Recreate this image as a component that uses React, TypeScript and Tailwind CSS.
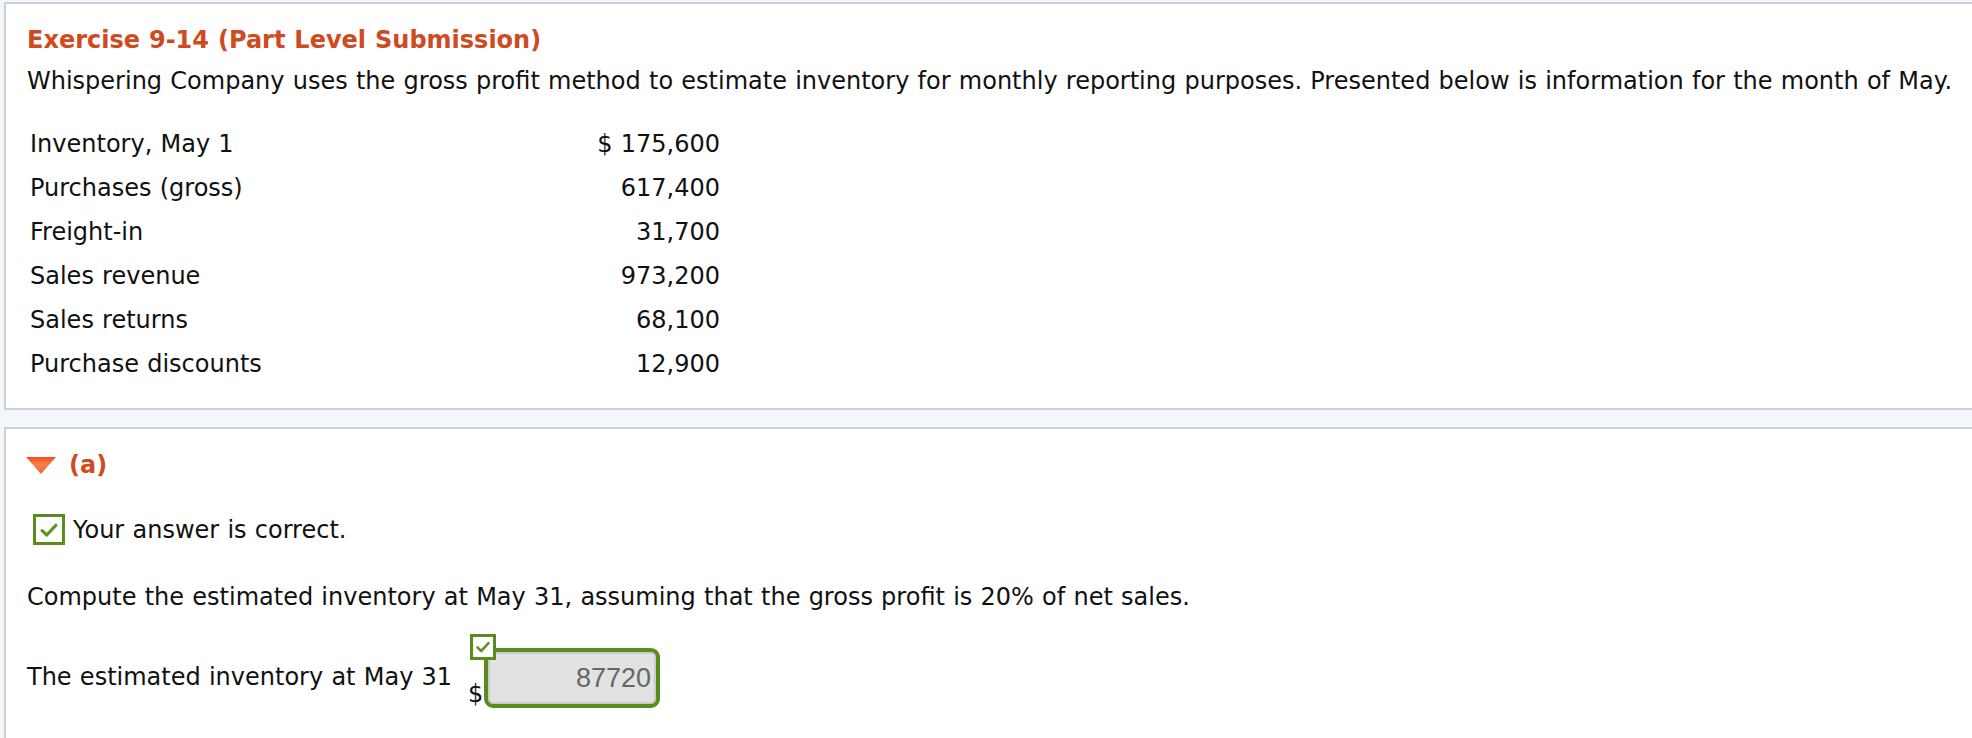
import React from "react";

// Data rows for the exercise table
const rows = [
  { label: "Inventory, May 1", value: "$ 175,600" },
  { label: "Purchases (gross)", value: "617,400" },
  { label: "Freight-in", value: "31,700" },
  { label: "Sales revenue", value: "973,200" },
  { label: "Sales returns", value: "68,100" },
  { label: "Purchase discounts", value: "12,900" },
];

function CheckBox({ size }: { size: "lg" | "sm" }) {
  const box = size === "lg" ? "w-[32px] h-[31px] border-[3px]" : "w-[26px] h-[26px] border-[3px]";
  const icon = size === "lg" ? "w-[20px] h-[20px]" : "w-[16px] h-[16px]";
  return (
    <div className={`${box} border-[#5b8a1f] bg-white flex items-center justify-center shrink-0`}>
      <svg viewBox="0 0 16 16" className={icon}>
        <polyline points="2.5,8.5 6.2,12 13.5,4.2" fill="none" stroke="#5f9424" strokeWidth="2.6" strokeLinecap="round" strokeLinejoin="round" />
      </svg>
    </div>
  );
}

function Caret() {
  return (
    <svg viewBox="0 0 30 17" className="w-[30px] h-[17px] shrink-0">
      <defs>
        <linearGradient id="caretFill" x1="0" y1="0" x2="0" y2="1">
          <stop offset="0" stopColor="#ef4f1c" />
          <stop offset="0.45" stopColor="#f6814a" />
          <stop offset="1" stopColor="#f2662c" />
        </linearGradient>
      </defs>
      <polygon points="0,0 30,0 15,17" fill="url(#caretFill)" />
    </svg>
  );
}

export default function App() {
  return (
    <div className="min-h-screen w-full bg-[#f4f7fa] pl-[4px] pt-[2px] font-['DejaVu_Sans',sans-serif] text-[24px] leading-[28px] text-[#111] [word-spacing:0.6px] overflow-hidden">
      {/* --- EXERCISE PANEL --- */}
      <section className="bg-white border-l-2 border-t-2 border-b-2 border-[#c8d0dc] pl-[21px] pt-[22px] pb-[22px]">
        <h1 className="font-bold text-[#cf4a1f] whitespace-nowrap">Exercise 9-14 (Part Level Submission)</h1>
        <p className="mt-[13px] whitespace-nowrap">
          Whispering Company uses the gross profit method to estimate inventory for monthly reporting purposes. Presented below is information for the month of May.
        </p>
        <div className="mt-[27px] w-[696px]">
          {rows.map((r) => (
            <div key={r.label} className="flex justify-between h-[44px] items-center px-[3px]">
              <span>{r.label}</span>
              <span>{r.value}</span>
            </div>
          ))}
        </div>
      </section>

      {/* --- PART (a) --- */}
      <section className="mt-[17px] min-h-[320px] bg-white border-l-2 border-t-2 border-[#c8d0dc] pl-[21px] pt-[22px]">
        <div className="flex items-center gap-[13px] -ml-[1px]">
          <Caret />
          <span className="font-bold text-[#cf4a1f]">(a)</span>
        </div>

        <div className="mt-[35px] flex items-center gap-[8px] ml-[6px]">
          <CheckBox size="lg" />
          <span>Your answer is correct.</span>
        </div>

        <p className="mt-[38px]">Compute the estimated inventory at May 31, assuming that the gross profit is 20% of net sales.</p>

        <div className="mt-[23px] flex items-start">
          <span className="w-[441px] mt-[29px] whitespace-nowrap">The estimated inventory at May 31</span>
          <div className="relative flex items-end h-[74px]">
            <span className="leading-[28px] w-[16px]">$</span>
            <div className="self-start mt-[14px] w-[176px] h-[60px] rounded-[9px] border-[4px] border-[#5b8a1f] bg-[#e2e2e2] shadow-[inset_0_0_0_2px_#cbcbcb] flex items-center justify-end pr-[5px] font-['Liberation_Sans',sans-serif] text-[27px] text-[#666] [word-spacing:0px]">
              87720
            </div>
            <div className="absolute left-[2px] top-0">
              <CheckBox size="sm" />
            </div>
          </div>
        </div>
      </section>
    </div>
  );
}
